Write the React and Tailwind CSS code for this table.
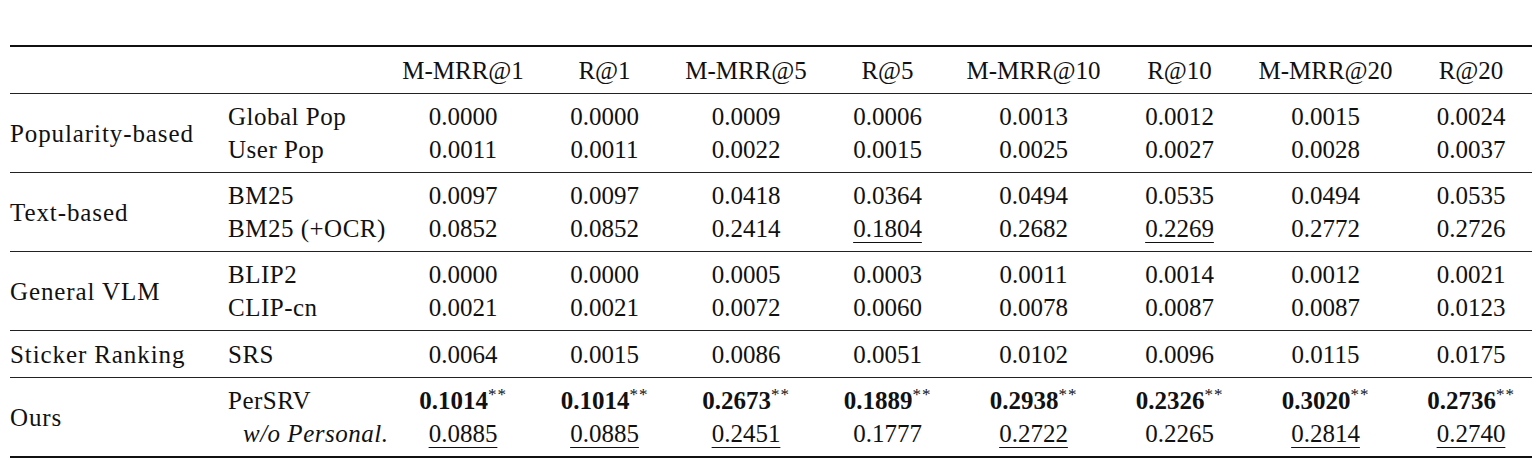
import React from "react";

const COLS = ["w-[160px]", "w-[123px]", "w-[160px]", "w-[123px]", "w-[169px]", "w-[123px]", "w-[169px]", "w-[122px]"];
const HEAD = ["M-MRR@1", "R@1", "M-MRR@5", "R@5", "M-MRR@10", "R@10", "M-MRR@20", "R@20"];

const GROUPS = [
  {
    label: "Popularity-based",
    rows: [
      { m: "Global Pop", v: ["0.0000", "0.0000", "0.0009", "0.0006", "0.0013", "0.0012", "0.0015", "0.0024"] },
      { m: "User Pop", v: ["0.0011", "0.0011", "0.0022", "0.0015", "0.0025", "0.0027", "0.0028", "0.0037"] },
    ],
  },
  {
    label: "Text-based",
    rows: [
      { m: "BM25", v: ["0.0097", "0.0097", "0.0418", "0.0364", "0.0494", "0.0535", "0.0494", "0.0535"] },
      { m: "BM25 (+OCR)", v: ["0.0852", "0.0852", "0.2414", "_0.1804", "0.2682", "_0.2269", "0.2772", "0.2726"] },
    ],
  },
  {
    label: "General VLM",
    rows: [
      { m: "BLIP2", v: ["0.0000", "0.0000", "0.0005", "0.0003", "0.0011", "0.0014", "0.0012", "0.0021"] },
      { m: "CLIP-cn", v: ["0.0021", "0.0021", "0.0072", "0.0060", "0.0078", "0.0087", "0.0087", "0.0123"] },
    ],
  },
  {
    label: "Sticker Ranking",
    rows: [{ m: "SRS", v: ["0.0064", "0.0015", "0.0086", "0.0051", "0.0102", "0.0096", "0.0115", "0.0175"] }],
  },
  {
    label: "Ours",
    rows: [
      { m: "PerSRV", bold: true, v: ["0.1014", "0.1014", "0.2673", "0.1889", "0.2938", "0.2326", "0.3020", "0.2736"] },
      { m: "w/o Personal.", italic: true, v: ["_0.0885", "_0.0885", "_0.2451", "0.1777", "_0.2722", "0.2265", "_0.2814", "_0.2740"] },
    ],
  },
];

function Value({ v, bold }) {
  const under = v.startsWith("_");
  const text = under ? v.slice(1) : v;
  if (bold) {
    return (
      <span className="font-bold whitespace-nowrap">
        {text}
        <sup className="text-[17px] font-normal tracking-[1px] -top-[9px]">**</sup>
      </span>
    );
  }
  return (
    <span className={under ? "underline decoration-1 underline-offset-[5px]" : ""}>{text}</span>
  );
}

function Rule({ thick }) {
  return <div className={thick ? "h-[2px] bg-[#111]" : "h-px bg-[#222]"} />;
}

function Group({ g }) {
  const single = g.rows.length === 1;
  return (
    <div className={"flex " + (single ? "pt-[7px] pb-[6px]" : "py-[6px]")}>
      <div className="w-[218px] flex items-center tracking-[0.9px]">{g.label}</div>
      <div className="w-[155px] flex flex-col tracking-[0.5px]">
        {g.rows.map((r, i) => (
          <div
            key={i}
            className={
              "h-[33px] flex items-center whitespace-nowrap " +
              (r.italic ? "italic pl-[15px]" : "")
            }
          >
            {r.m}
          </div>
        ))}
      </div>
      {COLS.map((w, c) => (
        <div key={c} className={w + " flex flex-col"}>
          {g.rows.map((r, i) => (
            <div key={i} className="h-[33px] flex items-center justify-center">
              <Value v={r.v[c]} bold={r.bold} />
            </div>
          ))}
        </div>
      ))}
    </div>
  );
}

export default function App() {
  return (
    <div className="w-[1537px] h-[460px] overflow-hidden bg-white text-[#111] text-[25px] leading-[33px] font-['Times_New_Roman','Tinos',serif]">
      <div className="h-[45px] overflow-hidden pl-[10px]">
        <div className="-mt-[26px] h-[33px] tracking-[1px] text-[#555]">
          results and underline the second best.
        </div>
      </div>
      <div className="ml-[10px] w-[1522px]">
        <Rule thick />
        <div className="flex h-[46px] items-center">
          <div className="w-[218px]" />
          <div className="w-[155px]" />
          {COLS.map((w, c) => (
            <div key={c} className={w + " text-center"}>
              {HEAD[c]}
            </div>
          ))}
        </div>
        {GROUPS.map((g, i) => (
          <React.Fragment key={i}>
            <Rule />
            <Group g={g} />
          </React.Fragment>
        ))}
        <Rule thick />
      </div>
    </div>
  );
}
